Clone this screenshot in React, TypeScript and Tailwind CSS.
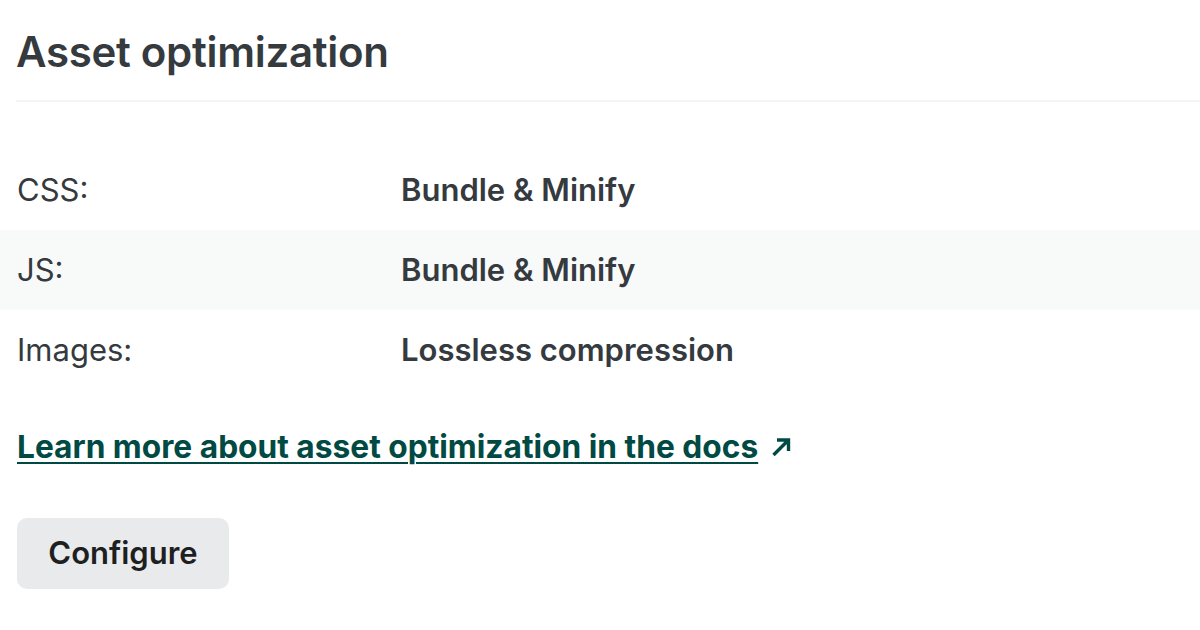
import React from "react";

const rows = [
  { label: "CSS:", value: "Bundle & Minify", shaded: false },
  { label: "JS:", value: "Bundle & Minify", shaded: true },
  { label: "Images:", value: "Lossless compression", shaded: false },
];

export default function App() {
  return (
    <div
      className="w-[1200px] h-[630px] bg-white overflow-hidden"
      style={{ fontFamily: "Inter, 'Liberation Sans', sans-serif" }}
    >
      <div className="pl-4">
        <h1 className="pt-[27px] pb-[23px] text-[42px] leading-[50px] font-semibold text-[#353a3f] tracking-[-0.3px]">
          Asset optimization
        </h1>
        <div className="h-[2px] bg-[#f3f4f4]" />
      </div>
      <div className="mt-[48px]">
        {rows.map((r) => (
          <div
            key={r.label}
            className={`flex items-center h-[80px] pl-[17px] text-[31px] text-[#353a3f] ${r.shaded ? "bg-[#f8f9f9]" : ""}`}
          >
            <div className="w-[384px] font-normal">{r.label}</div>
            <div className="font-semibold">{r.value}</div>
          </div>
        ))}
      </div>
      <div className="pl-[17px] mt-[39px] h-[36px] flex items-center gap-[12px]">
        <a
          href="#"
          className="text-[31.7px] leading-[36px] font-bold text-[#014a44] underline decoration-[2px] underline-offset-[4px]"
        >
          Learn more about asset optimization in the docs
        </a>
        <svg width="22" height="22" viewBox="0 0 22 22" className="text-[#014a44]">
          <path d="M3.5 19 L17 5.5 M7 4 H18.5 V15" stroke="currentColor" strokeWidth="3.4" fill="none" strokeLinecap="butt" strokeLinejoin="miter" />
        </svg>
      </div>
      <div className="pl-[17px] mt-[53px]">
        <button className="w-[212px] h-[71px] rounded-[10px] bg-[#e9eaec] text-[31px] font-semibold text-[#1e1f21]">
          Configure
        </button>
      </div>
    </div>
  );
}
